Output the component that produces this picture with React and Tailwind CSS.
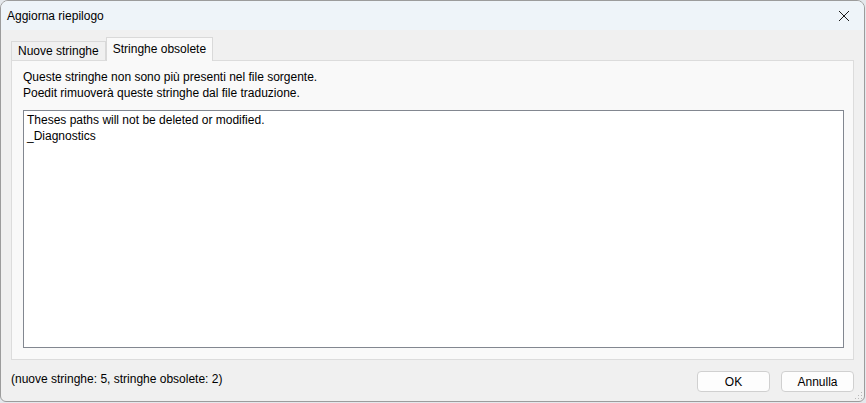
import React from "react";

const font = { fontFamily: '"Segoe UI", "Liberation Sans", "Noto Sans", sans-serif' };

const DialogButton = ({ label }) => (
    <button className="w-[73px] h-[21px] bg-[#fdfdfd] border border-[#d0d0d0] rounded-[4px] text-[12px] text-black leading-none flex items-center justify-center">
        {label}
    </button>
);

export default function App() {
    return (
        <div className="w-[866px] h-[403px] bg-[#e4e8ec] text-[12px] text-[#1a1a1a]" style={font}>
            <div className="w-[865px] h-[402px] border border-[#9c9c9c] rounded-t-[8px] rounded-b-[6px] overflow-hidden bg-[#f0f0f0] flex flex-col">
                {/* Title bar */}
                <div className="h-[29px] bg-[#eef4f9] flex items-center justify-between pl-[6px] pr-[11px] shrink-0">
                    <span className="text-[12px] text-black">Aggiorna riepilogo</span>
                    <svg width="12" height="12" viewBox="0 0 12 12" className="mr-[3px]">
                        <path d="M1 1 L11 11 M11 1 L1 11" stroke="#1a1a1a" strokeWidth="1" fill="none" />
                    </svg>
                </div>

                {/* Body */}
                <div className="flex-1 flex flex-col px-[10px] pt-[6px]">
                    {/* Tabs */}
                    <div className="flex items-end h-[24px] relative z-10">
                        <div className="h-[19px] px-[6px] border border-b-0 border-[#d9d9d9] bg-[#f0f0f0] flex items-center text-black">
                            Nuove stringhe
                        </div>
                        <div className="h-[24px] px-[6px] border border-b-0 border-[#d9d9d9] bg-[#f9f9f9] flex items-start pt-[2px] text-black -mb-[1px] relative">
                            Stringhe obsolete
                        </div>
                    </div>

                    {/* Tab panel */}
                    <div className="h-[300px] border border-[#dcdcdc] bg-[#f9f9f9] flex flex-col px-[11px] pt-[8px] pb-[11px] pr-[9px]">
                        <div className="leading-[16px] text-black">
                            <p>Queste stringhe non sono più presenti nel file sorgente.</p>
                            <p>Poedit rimuoverà queste stringhe dal file traduzione.</p>
                        </div>
                        <div className="mt-[9px] flex-1 bg-white border border-[#828790] px-[3px] pt-[1px] leading-[16px] text-black">
                            <p>Theses paths will not be deleted or modified.</p>
                            <p>_Diagnostics</p>
                        </div>
                    </div>

                    {/* Status row */}
                    <div className="flex-1 flex items-center justify-between relative">
                        <span className="text-black -mt-[3px]">(nuove stringhe: 5, stringhe obsolete: 2)</span>
                        <div className="flex gap-[11px] mt-[2px]">
                            <DialogButton label="OK" />
                            <DialogButton label="Annulla" />
                        </div>
                        <svg width="8" height="8" viewBox="0 0 8 8" className="absolute right-[-9px] bottom-[1px]">
                            <rect x="6" y="0" width="1" height="1" fill="#b8b8b8" />
                            <rect x="3" y="3" width="1" height="1" fill="#b8b8b8" />
                            <rect x="6" y="3" width="1" height="1" fill="#b8b8b8" />
                            <rect x="0" y="6" width="1" height="1" fill="#b8b8b8" />
                            <rect x="3" y="6" width="1" height="1" fill="#b8b8b8" />
                            <rect x="6" y="6" width="1" height="1" fill="#b8b8b8" />
                        </svg>
                    </div>
                </div>
            </div>
        </div>
    );
}
